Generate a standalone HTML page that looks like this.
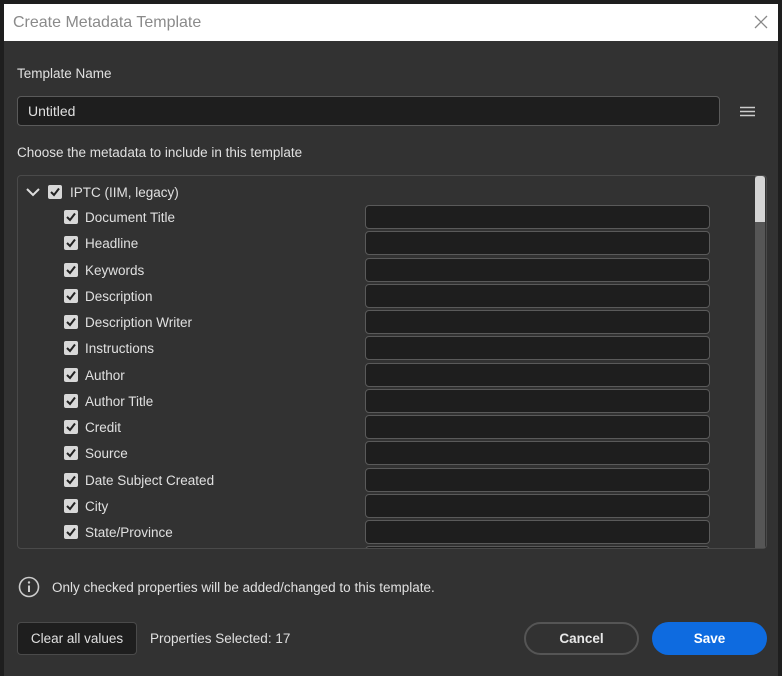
<!DOCTYPE html><html><head><style>
body{margin:0;width:782px;height:676px;background:#1e1e1e;font-family:"Liberation Sans",sans-serif;overflow:hidden;position:relative}
.dlg{position:absolute;left:4px;top:4px;width:774px;height:672px;background:#323232}
.title{position:absolute;left:0;top:0;width:774px;height:37px;background:#fff;color:#8a8a8a;font-size:16px;line-height:37px;text-indent:9px}
.x{position:absolute;left:750px;top:11px}
.lbl{position:absolute;color:#e0e0e0;font-size:13.5px}
.inp{position:absolute;background:#1e1e1e;border:1px solid #5a5a5a;border-radius:4px;box-sizing:border-box}
.list{position:absolute;left:13px;top:171px;width:750px;height:374px;border:1px solid #4a4a4a;border-radius:4px;box-sizing:border-box;overflow:hidden}
.row{position:absolute;left:0;height:24px;width:740px}
.cb{position:absolute;width:14px;height:14px;background:#d8d8d8;border-radius:2px;top:5px}
.cb svg{position:absolute;left:2px;top:2px}
.row span{position:absolute;top:5px;color:#e0e0e0;font-size:13.5px}
.row .f{position:absolute;left:347px;top:0;width:345px;height:24px;background:#1e1e1e;border:1px solid #5a5a5a;border-radius:4px;box-sizing:border-box}
.btn{position:absolute;box-sizing:border-box;font-size:13.5px;text-align:center}
</style></head><body>
<div class="dlg">
<div class="title">Create Metadata Template</div>
<svg class="x" width="14" height="14"><path d="M1 1L13 13M13 1L1 13" stroke="#888" stroke-width="1.3"/></svg>
<div class="lbl" style="left:13px;top:62px">Template Name</div>
<div class="inp" style="left:13px;top:92px;width:703px;height:30px"><span style="position:absolute;left:10px;top:6px;color:#e0e0e0;font-size:14px">Untitled</span></div>
<svg style="position:absolute;left:736px;top:102px" width="15" height="11"><path d="M0 1.5H15M0 5.5H15M0 9.5H15" stroke="#ccc" stroke-width="1.6"/></svg>
<div class="lbl" style="left:13px;top:141px">Choose the metadata to include in this template</div>
<div class="list">
<div class="row" style="top:4px"><svg style="position:absolute;left:8px;top:8px" width="14" height="9"><path d="M1 1L7 7L13 1" stroke="#ddd" stroke-width="2" fill="none"/></svg><div class="cb" style="left:30px"><svg width="10" height="10"><path d="M1 5L4 8L9 1.5" stroke="#222" stroke-width="2" fill="none"/></svg></div><span style="left:52px">IPTC (IIM, legacy)</span></div>
</div>
<div style="position:absolute;left:751px;top:172px;width:10px;height:372px;background:#565656"></div>
<div style="position:absolute;left:751px;top:172px;width:10px;height:46px;background:#d4d4d4;border-radius:3px 3px 0 0"></div>
<svg style="position:absolute;left:14px;top:572px" width="22" height="22"><circle cx="11" cy="11" r="9.5" stroke="#ccc" stroke-width="1.6" fill="none"/><path d="M11 9.5V16" stroke="#ccc" stroke-width="2"/><circle cx="11" cy="6.5" r="1.2" fill="#ccc"/></svg>
<div class="lbl" style="left:48px;top:576px">Only checked properties will be added/changed to this template.</div>
<div class="btn" style="left:13px;top:618px;width:120px;height:33px;background:#1e1e1e;border:1px solid #4a4a4a;border-radius:4px;color:#e0e0e0;line-height:31px">Clear all values</div>
<div class="lbl" style="left:146px;top:627px">Properties Selected: 17</div>
<div class="btn" style="left:520px;top:618px;width:115px;height:33px;border:2px solid #555;border-radius:17px;color:#e8e8e8;font-weight:bold;line-height:29px">Cancel</div>
<div class="btn" style="left:648px;top:618px;width:115px;height:33px;background:#0e6be0;border-radius:17px;color:#fff;font-weight:bold;line-height:33px">Save</div>
</div>
<script>
var n=["Document Title","Headline","Keywords","Description","Description Writer","Instructions","Author","Author Title","Credit","Source","Date Subject Created","City","State/Province",""];
var l=document.querySelector('.list'),h='';
n.forEach(function(t,i){var y=29+i*26.25;h+='<div class="row" style="top:'+y+'px"><div class="cb" style="left:46px"><svg width="10" height="10"><path d="M1 5L4 8L9 1.5" stroke="#222" stroke-width="2" fill="none"/></svg></div><span style="left:67px">'+t+'</span><div class="f"></div></div>';});
l.innerHTML+=h;
</script>
</body></html>
